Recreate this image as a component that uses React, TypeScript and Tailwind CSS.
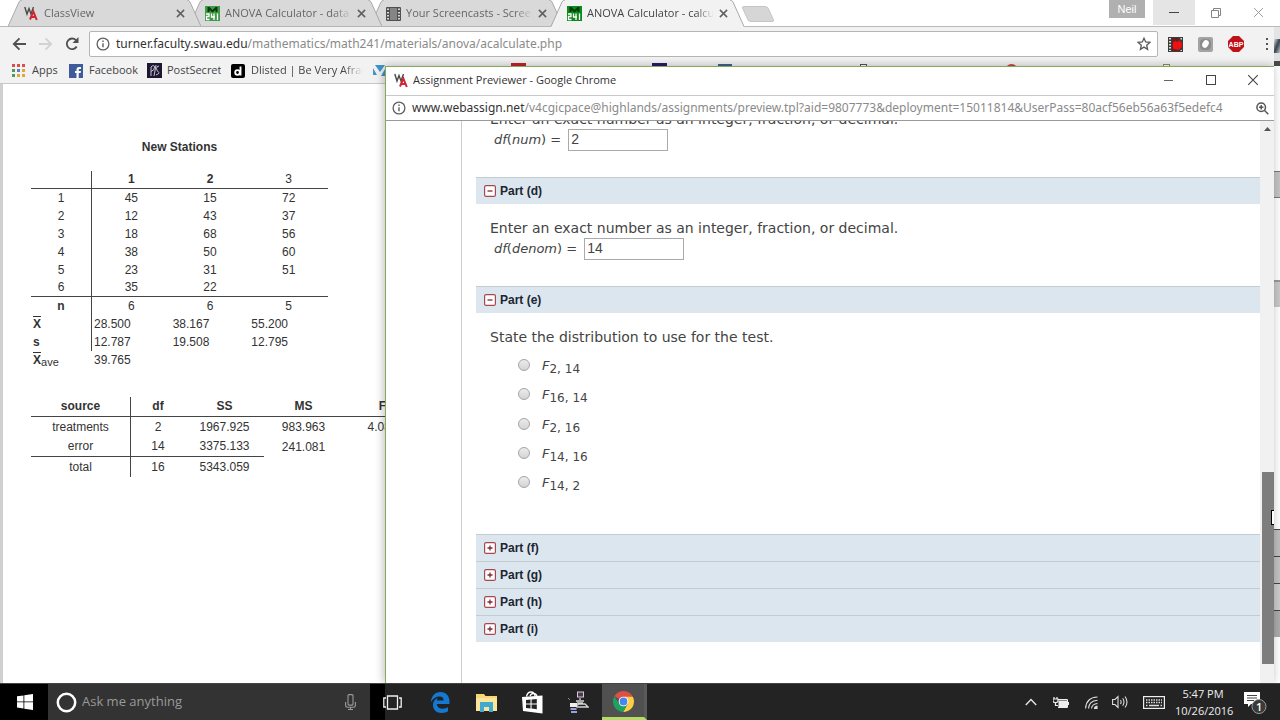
import { useState, type ReactNode } from 'react';

const UI = "font-['Open_Sans','Noto_Sans',sans-serif]";
const URL_FONT = "font-['Noto_Sans',sans-serif]";
const ARIAL = "font-['Liberation_Sans',sans-serif]";
const VERDANA = "font-['DejaVu_Sans',sans-serif]";

function WebAssignIcon() {
  return (
    <svg width="14" height="15" viewBox="0 0 14 15" fill="none" aria-hidden="true">
      <path d="M.8 1 3 8 5 2.500 7 8 9.500 1" stroke="#4a4a4a" strokeWidth="1.400" />
      <path d="M6 13.500 9.400 5.500 12.800 14M7.200 11H12" stroke="#cf2630" strokeWidth="2" />
    </svg>
  );
}

function MathIcon({ faded = false }: { faded?: boolean }) {
  return (
    <svg width="15" height="15" viewBox="0 0 15 15" fill="none" aria-hidden="true">
      <rect width="15" height="15" fill={faded ? '#3f9a45' : '#0d8a1b'} />
      <path d="M2.500 6V1h2l3 3 3-3h2v5H10.500V4L7.500 6.500 4.500 4V6z" fill="#073d0c" />
      <path d="M1 8h3v2.500H1.500V13.500H4.500M6.500 7.500V11H10M9 7.500V14M12.500 7.500V14" stroke="#fff" strokeWidth="1.300" />
    </svg>
  );
}

function FilmIcon() {
  return (
    <svg width="15" height="14" viewBox="0 0 15 14" aria-hidden="true">
      <rect width="15" height="14" rx="1" fill="#505050" />
      <rect x="4" y="1" width="7" height="12" fill="#858585" />
      <path d="M1 1.500h2v1.500H1zM1 5h2v1.500H1zM1 8h2v1.500H1zM1 11h2v1.500H1zM12 1.500h2v1.500h-2zM12 5h2v1.500h-2zM12 8h2v1.500h-2zM12 11h2v1.500h-2z" fill="#d6d6d6" />
    </svg>
  );
}

function InfoIcon() {
  return (
    <svg width="14" height="14" viewBox="0 0 14 14" fill="none" aria-hidden="true">
      <circle cx="7" cy="7" r="5.900" stroke="#5f5f5f" strokeWidth="1.300" />
      <path d="M7 6.200V10.300M7 3.600V5" stroke="#5f5f5f" strokeWidth="1.400" />
    </svg>
  );
}

function Cross({ size, color, width }: { size: number; color: string; width: number }) {
  return (
    <svg width={size} height={size} viewBox="0 0 10 10" fill="none" aria-hidden="true">
      <path d="M1 1 9 9M9 1 1 9" stroke={color} strokeWidth={width} />
    </svg>
  );
}

type TabProps = { icon: ReactNode; title: string; active?: boolean; layer: string };

function Tab({ icon, title, active = false, layer }: TabProps) {
  return (
    <div className={`relative -mr-3 flex h-[27px] w-[193px] shrink-0 items-center pl-4 pr-4 ${layer}`}>
      <svg className="absolute inset-0 h-full w-full" viewBox="0 0 193 27" preserveAspectRatio="none" aria-hidden="true">
        <path d="M0 27 11 2Q12 0 14 0H179Q181 0 182 2L193 27z" fill={active ? '#f2f2f2' : '#d9d9d9'} />
        <path d="M0 26.500 11 2Q12 0 14 0M179 0Q181 0 182 2L193 26.500" fill="none" stroke="#a8a8a8" />
        {!active && <path d="M0 26.500H193" stroke="#b5b5b5" />}
      </svg>
      <span className="relative flex w-5 shrink-0">{icon}</span>
      <button
        type="button"
        className={`relative w-[128px] overflow-hidden whitespace-nowrap text-left text-[11px] [mask-image:linear-gradient(to_right,black_85%,transparent_99%)] ${active ? 'text-[#444]' : 'text-[#666]'}`}
      >
        {title}
      </button>
      <button type="button" aria-label={`Close ${title}`} className="relative ml-auto flex">
        <Cross size={9} color="#606060" width={1.7} />
      </button>
    </div>
  );
}

function TabStrip() {
  return (
    <div className="flex h-[27px] items-start border-b border-[#b9b9b9] bg-white pl-2">
      <Tab icon={<WebAssignIcon />} title="ClassView" layer="z-[3]" />
      <Tab icon={<MathIcon faded />} title="ANOVA Calculator - data" layer="z-[2]" />
      <Tab icon={<FilmIcon />} title="Your Screencasts - Screen" layer="z-[1]" />
      <Tab icon={<MathIcon />} title="ANOVA Calculator - calcu" active layer="z-[4]" />
      <button type="button" aria-label="New tab" className="ml-[10px] mt-[6px] flex">
        <svg width="32" height="16" viewBox="0 0 32 16" aria-hidden="true">
          <path d="M2 .5H23Q25 .5 26 2L31.500 14Q32 15.500 30 15.500H9Q7 15.500 6 14L.5 2Q0 .5 2 .5z" fill="#d6d6d6" stroke="#c4c4c4" />
        </svg>
      </button>
      <div className="ml-auto flex items-start">
        <button type="button" className={`${ARIAL} mr-2 h-[18px] w-9 bg-[#b0b0b0] text-[11px] leading-[16px] text-white`}>
          Neil
        </button>
        <button type="button" aria-label="Minimize" className="flex h-[25px] w-[42px] items-center justify-center bg-[#e5e5e5]">
          <span className="h-px w-[10px] bg-[#444]" />
        </button>
        <button type="button" aria-label="Restore" className="flex h-[25px] w-[42px] items-center justify-center">
          <svg width="10" height="10" viewBox="0 0 10 10" fill="none" stroke="#858585" aria-hidden="true">
            <path d="M.5 2.500H7.500V9.500H.5zM2.500 2.500V.5H9.500V7.500H7.500" />
          </svg>
        </button>
        <button type="button" aria-label="Close" className="flex h-[25px] w-[43px] items-center justify-center">
          <Cross size={11} color="#999" width={0.9} />
        </button>
      </div>
    </div>
  );
}

function Toolbar() {
  return (
    <div className="flex h-[31px] items-center pr-3 pl-3 pt-[3px]">
      <button type="button" aria-label="Back" className="flex w-[27px]">
        <svg width="14" height="14" viewBox="0 0 14 14" fill="none" stroke="#505050" strokeWidth="1.800" aria-hidden="true">
          <path d="M14 7H2M7.500 1.300 1.800 7 7.500 12.700" />
        </svg>
      </button>
      <button type="button" aria-label="Forward" className="flex w-[26px]">
        <svg width="14" height="14" viewBox="0 0 14 14" fill="none" stroke="#d2d2d2" strokeWidth="1.800" aria-hidden="true">
          <path d="M0 7H12M6.500 1.300 12.200 7 6.500 12.700" />
        </svg>
      </button>
      <button type="button" aria-label="Reload" className="flex w-6">
        <svg width="14" height="14" viewBox="0 0 14 14" fill="none" aria-hidden="true">
          <path d="M11.700 9.500A5.300 5.300 0 1 1 11 3.200" stroke="#505050" strokeWidth="1.800" />
          <path d="M13.500 0V6H7.500z" fill="#505050" />
        </svg>
      </button>
      <div className="flex h-[26px] min-w-0 flex-1 items-center rounded-[2px] border border-[#b5b5b5] bg-white pr-[6px] pl-[6px]">
        <InfoIcon />
        <p className={`${URL_FONT} ml-[6px] flex-1 truncate text-xs leading-5 text-[#8a8a8a]`}>
          <span className="text-[#333]">turner.faculty.swau.edu</span>/mathematics/math241/materials/anova/acalculate.php
        </p>
        <button type="button" aria-label="Bookmark this page" className="flex">
          <svg width="14" height="14" viewBox="0 0 14 14" fill="none" stroke="#5a5a5a" strokeWidth="1.300" aria-hidden="true">
            <path d="M7 1.200 8.700 5 12.800 5.400 9.700 8.200 10.600 12.300 7 10.100 3.400 12.300 4.300 8.200 1.200 5.400 5.300 5z" />
          </svg>
        </button>
      </div>
      <div className="flex items-center pl-[10px]">
        <button type="button" aria-label="Screencast recorder" className="mr-[15px] flex">
          <svg width="15" height="15" viewBox="0 0 15 15" aria-hidden="true">
            <rect width="15" height="15" fill="#3c3c3c" />
            <rect x="4" y="1" width="7" height="13" fill="#6b2020" />
            <path d="M5 5.500 7 4 9 5 11 3.500 14 6 13.500 11 10 13 5 11.500z" fill="#f01010" />
            <path d="M1 1h2v1.500H1zM1 4h2v1.500H1zM1 7h2v1.500H1zM1 10h2v1.500H1zM1 13h2v1H1zM12.500 1h1.500v1.500h-1.500zM12.500 13h1.500v1h-1.500z" fill="#ddd" />
          </svg>
        </button>
        <button type="button" aria-label="Extension" className="mr-[15px] flex">
          <svg width="15" height="15" viewBox="0 0 15 15" aria-hidden="true">
            <rect width="15" height="15" rx="2" fill="#a3a3a3" />
            <rect x="2" y="2" width="11" height="11" rx="4" fill="#8c8c8c" />
            <ellipse cx="7.500" cy="7" rx="3" ry="4" transform="rotate(30 7.500 7)" fill="#fff" />
          </svg>
        </button>
        <button type="button" aria-label="Adblock Plus" className="mr-[22px] flex">
          <svg width="16" height="16" viewBox="0 0 16 16" aria-hidden="true">
            <path d="M5 0H11L16 5V11L11 16H5L0 11V5z" fill="#c01018" />
            <text x="8" y="10.500" fontSize="7" fontWeight="700" fill="#fff" textAnchor="middle" fontFamily="Liberation Sans, sans-serif">ABP</text>
          </svg>
        </button>
        <button type="button" aria-label="Menu" className="flex flex-col gap-[3px]">
          <span className="size-[2px] bg-[#555]" />
          <span className="size-[2px] bg-[#555]" />
          <span className="size-[2px] bg-[#555]" />
        </button>
      </div>
    </div>
  );
}

function AppsIcon() {
  const colors = ['#d9504a', '#d9504a', '#d9504a', '#4a9a5c', '#5a7fc0', '#e0a53c', '#4a9a5c', '#e0a53c', '#e0a53c'];
  return (
    <svg width="13" height="13" viewBox="0 0 13 13" aria-hidden="true">
      {colors.map((c, i) => (
        <rect key={i} x={(i % 3) * 5} y={Math.floor(i / 3) * 5} width="3" height="3" fill={c} />
      ))}
    </svg>
  );
}

function Bookmark({ icon, label, width, fade = false }: { icon: ReactNode; label?: string; width: string; fade?: boolean }) {
  return (
    <a href="#bookmark" className={`flex shrink-0 items-center ${width}`}>
      <span className="flex w-5 shrink-0">{icon}</span>
      {label && (
        <span className={`overflow-hidden whitespace-nowrap text-[11px] text-[#444] ${fade ? 'w-[112px] [mask-image:linear-gradient(to_right,black_82%,transparent)]' : ''}`}>
          {label}
        </span>
      )}
    </a>
  );
}

function BookmarksBar() {
  return (
    <nav aria-label="Bookmarks" className="flex h-[26px] items-center overflow-hidden border-b border-[#c8c8c8] pl-3">
      <Bookmark icon={<AppsIcon />} label="Apps" width="w-[57px]" />
      <Bookmark
        label="Facebook"
        width="w-[78px]"
        icon={
          <svg width="14" height="14" viewBox="0 0 14 14" aria-hidden="true">
            <rect width="14" height="14" fill="#3f5c9a" />
            <path d="M7.500 14V9H6V7H7.500V5.500Q7.500 3 10 3H12V5H10.500Q9.700 5 9.700 5.800V7H12L11.600 9H9.700V14z" fill="#fff" />
          </svg>
        }
      />
      <Bookmark
        label="PostSecret"
        width="w-[84px]"
        icon={
          <svg width="15" height="15" viewBox="0 0 15 15" fill="none" aria-hidden="true">
            <rect width="15" height="15" fill="#1d1730" />
            <path d="M4 13V4Q7 1 7.500 4T4 8.500M12 3Q9.500 3 9.500 5.500T11.500 9 9 12M9 2 7 13" stroke="#c8c4d4" strokeWidth="1" />
          </svg>
        }
      />
      <Bookmark
        label="Dlisted | Be Very Afrai"
        width="w-[142px]"
        fade
        icon={
          <svg width="14" height="14" viewBox="0 0 14 14" fill="none" aria-hidden="true">
            <rect width="14" height="14" rx="2" fill="#000" />
            <circle cx="6.500" cy="8.500" r="2.300" stroke="#fff" strokeWidth="1.800" />
            <path d="M9.500 2.500V11.500" stroke="#fff" strokeWidth="1.900" />
          </svg>
        }
      />
      <Bookmark
        width="w-[138px]"
        icon={
          <svg width="14" height="12" viewBox="0 0 14 12" aria-hidden="true">
            <path d="M2 0H12L7 7zM0 3 4 10H0zM12 4V11H8z" fill="#3f95cc" />
          </svg>
        }
      />
      <Bookmark width="w-[141px]" icon={<span className="size-[15px] bg-[#c4202f]" />} />
      <Bookmark width="w-[66px]" icon={<span className="size-[15px] border-2 border-dashed border-[#2a1a6a] bg-[#2a1a6a]" />} />
      <Bookmark width="w-[142px]" icon={<span className="size-[14px] bg-[#3f6488]" />} />
      <Bookmark width="w-[145px]" icon={<span className="h-[14px] w-[7px] border border-[#555] bg-white" />} />
      <Bookmark width="w-[158px]" icon={<span className="size-[13px] rounded-full bg-[#c8483c]" />} />
      <Bookmark width="w-[20px]" icon={<span className="h-[14px] w-[7px] border border-[#99904f] bg-white" />} />
    </nav>
  );
}

const scores: (string | number)[][] = [
  [1, 45, 15, 72],
  [2, 12, 43, 37],
  [3, 18, 68, 56],
  [4, 38, 50, 60],
  [5, 23, 31, 51],
  [6, 35, 22, ''],
];

const XBar = () => <span className="overline">X</span>;

function StationsTable() {
  const stats: { label: ReactNode; values: string[]; line: boolean }[] = [
    { label: <XBar />, values: ['28.500', '38.167', '55.200'], line: true },
    { label: 's', values: ['12.787', '19.508', '12.795'], line: true },
    { label: <><XBar /><sub className="text-[11px] font-normal">ave</sub></>, values: ['39.765', '', ''], line: false },
  ];
  return (
    <table className="w-[297px] table-fixed border-separate border-spacing-0 text-center text-xs leading-[17px]">
      <caption className="h-[33px] pt-px text-center font-bold">New Stations</caption>
      <colgroup>
        <col className="w-[61px]" />
        <col />
        <col />
        <col />
      </colgroup>
      <thead>
        <tr className="h-[18px]">
          <th className="border-b border-r border-[#444] p-0" />
          <th className="border-b border-[#444] p-0">1</th>
          <th className="border-b border-[#444] p-0">2</th>
          <th className="border-b border-[#444] p-0 font-normal">3</th>
        </tr>
      </thead>
      <tbody>
        {scores.map((row, r) => (
          <tr key={r} className="h-[18px]">
            {row.map((v, c) => (
              <td key={c} className={`border-[#444] p-0 ${c === 0 ? 'border-r' : ''} ${r === 5 ? 'border-b' : ''}`}>{v}</td>
            ))}
          </tr>
        ))}
        <tr className="h-[18px]">
          <th className="border-r border-[#444] p-0">n</th>
          <td className="p-0">6</td>
          <td className="p-0">6</td>
          <td className="p-0">5</td>
        </tr>
        {stats.map((s, i) => (
          <tr key={i} className="h-[18px] text-left">
            <th className={`border-[#444] py-0 pr-0 pl-[2px] ${s.line ? 'border-r' : ''}`}>{s.label}</th>
            {s.values.map((v, c) => (
              <td key={c} className="py-0 pr-0 pl-[2px]">{v}</td>
            ))}
          </tr>
        ))}
      </tbody>
    </table>
  );
}

function AnovaTable() {
  const head = ['source', 'df', 'SS', 'MS', 'F'];
  const rows = [
    ['treatments', '2', '1967.925', '983.963', '4.081'],
    ['error', '14', '3375.133', '241.081', ''],
    ['total', '16', '5343.059', '', ''],
  ];
  return (
    <table className="mt-7 w-[391px] table-fixed border-separate border-spacing-0 text-center text-xs leading-[17px]">
      <colgroup>
        <col className="w-[100px]" />
        <col className="w-[54px]" />
        <col />
        <col />
        <col />
      </colgroup>
      <thead>
        <tr className="h-5">
          {head.map((h, i) => (
            <th key={h} className={`border-b border-[#444] p-0 ${i === 0 ? 'border-r' : ''}`}>{h}</th>
          ))}
        </tr>
      </thead>
      <tbody>
        {rows.map((row, r) => (
          <tr key={r} className="h-5">
            {row.map((v, c) => (
              <td key={c} className={`border-[#444] p-0 ${c === 0 ? 'border-r' : ''} ${r === 1 && c < 3 ? 'border-b' : ''}`}>{v}</td>
            ))}
          </tr>
        ))}
      </tbody>
    </table>
  );
}

function PartBar({ name, open = false }: { name: string; open?: boolean }) {
  const [expanded, setExpanded] = useState(open);
  return (
    <button
      type="button"
      aria-expanded={expanded}
      onClick={() => setExpanded(!expanded)}
      className={`${ARIAL} flex h-[27px] w-full items-center gap-1 border-t border-[#c4ccd2] bg-[#dbe6ee] pl-2 text-xs font-bold text-[#1c2530]`}
    >
      <svg width="12" height="12" viewBox="0 0 12 12" aria-hidden="true">
        <rect x=".6" y=".6" width="10.800" height="10.800" rx="1.500" fill="#fff" stroke="#a8474f" strokeWidth="1.200" />
        <path d={expanded ? 'M3.500 6H8.500' : 'M3.500 6H8.500M6 3.500V8.500'} stroke="#7d2a35" strokeWidth="1.300" />
      </svg>
      {name}
    </button>
  );
}

function AnswerField({ id, variable, value }: { id: string; variable: string; value: string }) {
  return (
    <div className="px-[14px]">
      <p className="h-5 text-sm leading-5">Enter an exact number as an integer, fraction, or decimal.</p>
      <div className="flex h-[22px] items-center gap-[7px] pl-1">
        <label htmlFor={id}>
          <i>df</i>(<i>{variable}</i>) =
        </label>
        <input id={id} type="text" defaultValue={value} className={`${ARIAL} h-[22px] w-[100px] border border-[#aaa] bg-white px-[2px] pb-[2px] text-sm text-[#444] outline-none`} />
      </div>
    </div>
  );
}

function PreviewWindow() {
  const options = ['2, 14', '16, 14', '2, 16', '14, 16', '14, 2'];
  return (
    <section
      aria-label="Assignment Previewer"
      className="absolute bottom-0 left-[385px] right-[6px] top-[66px] z-10 flex flex-col border-l border-t border-[#86a85c] bg-white shadow-[-1px_0_9px_rgba(0,0,0,0.28)]"
    >
      <header className="flex h-[28px] shrink-0 items-center pb-[2px] pl-2">
        <span className="flex w-[19px]"><WebAssignIcon /></span>
        <h1 className="text-[11px] text-[#333]">Assignment Previewer - Google Chrome</h1>
        <div className="ml-auto flex">
          <button type="button" aria-label="Minimize" className="flex w-[42px] items-center justify-center">
            <span className="h-px w-[9px] bg-[#666]" />
          </button>
          <button type="button" aria-label="Maximize" className="flex h-[26px] w-[43px] items-center justify-center">
            <span className="size-[10px] border border-[#444]" />
          </button>
          <button type="button" aria-label="Close" className="flex w-[42px] items-center justify-center">
            <Cross size={12} color="#444" width={0.9} />
          </button>
        </div>
      </header>
      <div className="flex h-[26px] shrink-0 items-center border-b border-t border-b-[#9a9a9a] border-t-[#c8c8c8] pr-[5px] pl-[6px]">
        <InfoIcon />
        <p className={`${URL_FONT} ml-[6px] min-w-0 flex-1 overflow-hidden whitespace-nowrap text-xs leading-5 text-[#8a8a8a]`}>
          <span className="text-[#333]">www.webassign.net</span>
          /v4cgicpace@highlands/assignments/preview.tpl?aid=9807773&amp;deployment=15011814&amp;UserPass=80acf56eb56a63f5edefc4
        </p>
        <button type="button" aria-label="Zoom" className="ml-[6px] flex">
          <svg width="13" height="13" viewBox="0 0 13 13" fill="none" stroke="#555" strokeWidth="1.500" aria-hidden="true">
            <circle cx="5.200" cy="5.200" r="4.300" />
            <path d="M8.300 8.300 12.300 12.300M3 5.200H7.400M5.200 3V7.400" />
          </svg>
        </button>
      </div>
      <div className="flex min-h-0 flex-1">
        <div className="w-[76px] shrink-0 border-r border-[#ccc]" />
        <main className={`${VERDANA} min-w-0 flex-1 overflow-hidden pl-[14px] text-[13px] text-[#444]`}>
          <div className="-mt-3 mb-[26px]">
            <AnswerField id="df-num" variable="num" value="2" />
          </div>
          <PartBar name="Part (d)" open />
          <div className="mb-[26px] mt-[14px]">
            <AnswerField id="df-denom" variable="denom" value="14" />
          </div>
          <PartBar name="Part (e)" open />
          <fieldset className="mb-9 mt-[14px] px-[14px]">
            <legend className="h-5 text-sm leading-5">State the distribution to use for the test.</legend>
            <div className="mt-[3px] mb-px flex h-[147px] flex-col pl-7">
              {options.map((o) => (
                <label key={o} className="flex flex-1 items-center gap-3">
                  <input
                    type="radio"
                    name="distribution"
                    className="size-3 appearance-none rounded-full border border-[#a5a5a5] bg-linear-to-b from-[#ececec] to-[#d4d4d4] checked:bg-[#777]"
                  />
                  <span className="pt-[2px] leading-5"><i>F</i><sub className="text-xs">{o}</sub></span>
                </label>
              ))}
            </div>
          </fieldset>
          <PartBar name="Part (f)" />
          <PartBar name="Part (g)" />
          <PartBar name="Part (h)" />
          <PartBar name="Part (i)" />
        </main>
        <div className="relative w-[14px] shrink-0 bg-[#f1f1f1]">
          <svg className="mx-auto mt-[6px]" width="7" height="4" viewBox="0 0 7 4" aria-hidden="true"><path d="M0 4 3.500 0 7 4z" fill="#555" /></svg>
          <div className="absolute bottom-[19px] right-0 h-[192px] w-3 bg-[#7d7d7d]" />
          <div className="absolute bottom-[158px] right-0 h-[15px] w-[3px] border-y border-l border-black bg-white" />
        </div>
      </div>
    </section>
  );
}

function Taskbar() {
  return (
    <footer className="flex h-[37px] shrink-0 items-stretch border-t border-[#444] bg-[#232323]">
      <button type="button" aria-label="Start" className="flex w-12 shrink-0 items-center justify-center bg-black">
        <svg className="ml-[2px]" width="16" height="16" viewBox="0 0 16 16" fill="#fff" aria-hidden="true">
          <path d="M0 2.300 6.500 1.400V7.500H0zM7.300 1.300 16 0V7.500H7.300zM0 8.300H6.500V14.500L0 13.600zM7.300 8.300H16V16L7.300 14.700z" />
        </svg>
      </button>
      <div className="flex w-[322px] shrink-0 items-center bg-[#333] pr-[14px] pl-2">
        <svg width="21" height="21" viewBox="0 0 21 21" fill="none" aria-hidden="true"><circle cx="10.500" cy="10.500" r="8.700" stroke="#fff" strokeWidth="2.500" /></svg>
        <input aria-label="Search" placeholder="Ask me anything" className="ml-[5px] min-w-0 flex-1 bg-transparent text-[13px] text-white outline-none placeholder:text-[#9a9a9a]" />
        <svg width="11" height="16" viewBox="0 0 11 16" fill="none" stroke="#9a9a9a" strokeWidth="1.100" aria-hidden="true">
          <rect x="3" y=".6" width="5" height="10.500" rx="1" />
          <path d="M.6 8V11.500Q.6 13.200 2.500 13.200H8.500Q10.400 13.200 10.400 11.500V8M5.500 13V15.500M3 15.500H8" />
        </svg>
      </div>
      <div className="w-[15px] shrink-0 bg-black" />
      <div className="-ml-[15px] flex shrink-0 items-stretch">
        <button type="button" aria-label="Task view" className="flex w-[45px] items-center justify-center">
          <svg width="19" height="15" viewBox="0 0 19 15" fill="none" stroke="#f0f0f0" strokeWidth="1.300" aria-hidden="true">
            <path d="M4.500 1H14.500V14H4.500zM3 3H.8V12H3M16 3H18.200V12H16" />
          </svg>
        </button>
        <button type="button" aria-label="Edge" className="flex w-[48px] items-center justify-center">
          <svg className="ml-[2px]" width="20" height="21" viewBox="0 0 20 21" aria-hidden="true">
            <path d="M.8 10C1.500 4 5 0 10.500 0 16 0 19.500 4 19.500 9.500V12H6.800C7 15 9.500 16.700 12.500 16.700 14.700 16.700 16.500 16.200 18 15.300V19.300C16.300 20.300 14.300 21 11.700 21 6.200 21 3 17.500 3 13 3 9.700 5 7 8 5.800 7.200 6.700 6.900 7.600 6.800 8.600H13.600C13.600 5.800 12.300 4.500 9.500 4.500 6 4.500 2.800 6.500.8 10z" fill="#1379d3" />
          </svg>
        </button>
        <button type="button" aria-label="File Explorer" className="flex w-[46px] items-center justify-center">
          <svg width="21" height="19" viewBox="0 0 21 19" aria-hidden="true">
            <path d="M0 1H8L9.500 3H21V18H0z" fill="#f5d778" />
            <path d="M0 5H21V18H0z" fill="#fbe59b" />
            <path d="M4 9H17V19H13V14H8V19H4z" fill="#41a9d0" />
          </svg>
        </button>
        <button type="button" aria-label="Store" className="flex w-[46px] items-center justify-center">
          <svg width="21" height="23" viewBox="0 0 21 23" aria-hidden="true">
            <path d="M0 6 20.500 4.500V22.500L1 20z" fill="#fff" />
            <path d="M4.500 5.500Q5.500 1 9 1T13 5M8 5Q9 2.500 11.500 2.500T15 5" fill="none" stroke="#fff" strokeWidth="1.300" />
            <path d="M4 9 8.500 8.600V12.500H4zM9.600 8.500 14.800 8V12.500H9.600zM4 13.500H8.500V17.500L4 17zM9.600 13.500H14.800V18.200L9.600 17.600z" fill="#232323" />
          </svg>
        </button>
        <button type="button" aria-label="Network connection" className="flex w-[47px] items-center justify-center">
          <svg width="21" height="22" viewBox="0 0 21 22" fill="none" aria-hidden="true">
            <rect x="9.500" y="1" width="6" height="5" fill="#4a3a50" stroke="#d8c8d8" />
            <path d="M8 10H16M9 12H15M12 7V9M8 15 11 13H17L20 16H9z" stroke="#d5d5d5" strokeWidth="1.300" />
            <rect x="2" y="12" width="7" height="4" fill="#eee" />
            <path d="M2.500 18H8.500M3 21H9" stroke="#9a9fd8" strokeWidth="2" />
            <path d="M0 7 2 9" stroke="#888" />
          </svg>
        </button>
        <button type="button" aria-label="Google Chrome" className="flex w-[45px] items-center justify-center border-b-[3px] border-r-[3px] border-b-[#b4dc64] border-r-[#5a5a5a] bg-[#505050] pt-[2px]">
          <svg width="21" height="21" viewBox="0 0 22 22" aria-hidden="true">
            <path d="M11 11 1.470 5.500A11 11 0 0 1 20.530 5.500z" fill="#dd5144" />
            <path d="M11 6H20.800A11 11 0 0 1 10.600 22L15.500 13z" fill="#ffcd46" />
            <path d="M1.470 5.500A11 11 0 0 0 10.700 22L15.300 13.500 6.700 13.500z" fill="#1da261" />
            <circle cx="11" cy="11" r="5.100" fill="#fff" />
            <circle cx="11" cy="11" r="4.100" fill="#4a85ec" />
          </svg>
        </button>
      </div>
      <div className="ml-auto flex shrink-0 items-center pr-[13px]">
        <button type="button" aria-label="Show hidden icons" className="mr-4 flex">
          <svg width="12" height="8" viewBox="0 0 12 8" fill="none" aria-hidden="true"><path d="M.8 7 6 1.500 11.200 7" stroke="#e5e5e5" strokeWidth="1.400" /></svg>
        </button>
        <svg className="mr-4" width="16" height="13" viewBox="0 0 16 13" fill="none" aria-label="Battery" role="img">
          <path d="M1 1V3M4 1V3M0 3H5V5Q5 6.500 2.500 6.500T0 5zM2.500 6V9.500H5" stroke="#eee" strokeWidth="1.200" />
          <rect x="5.500" y="4.500" width="9" height="6.500" fill="#eee" />
          <path d="M5 3.500H14.500V11.500H5M15.500 6V9" stroke="#eee" strokeWidth="1" />
        </svg>
        <svg className="mr-[14px]" width="13" height="13" viewBox="0 0 13 13" fill="none" stroke="#ddd" strokeWidth="1.100" aria-label="Wi-Fi" role="img">
          <path d="M.6 12.500Q1 1.500 12.500 1M3.500 12.500Q4 5 12.500 4.300M6.500 12.500Q7 8 12.500 7.500" />
          <path d="M9.500 12.500Q9.500 10.500 12 10.200V12.500z" fill="#ddd" />
        </svg>
        <svg className="mr-[15px]" width="16" height="14" viewBox="0 0 16 14" fill="none" stroke="#ddd" strokeWidth="1.100" aria-label="Volume" role="img">
          <path d="M.6 4.500H3L6 1.500V12.500L3 9.500H.6zM8.500 5Q9.800 7 8.500 9M10.700 3.300Q13.300 7 10.700 10.700M13 1.500Q17 7 13 12.500" />
        </svg>
        <svg className="mr-[10px]" width="22" height="13" viewBox="0 0 22 13" fill="none" aria-label="Keyboard" role="img">
          <rect x=".6" y=".6" width="20.800" height="11.800" stroke="#eee" strokeWidth="1.200" />
          <path d="M3 4H19M3 6.500H19" stroke="#ddd" strokeWidth="1.300" strokeDasharray="1.500 1" />
          <path d="M3 9.500H4.500M6 9.500H16M17.500 9.500H19" stroke="#ddd" strokeWidth="1.300" />
        </svg>
        <div className="w-[56px] whitespace-nowrap text-center text-[11px] leading-[17px] text-[#eee]">
          <p>5:47 PM</p>
          <p>10/26/2016</p>
        </div>
        <button type="button" aria-label="1 notification" className="relative ml-[13px] flex">
          <svg width="23" height="24" viewBox="0 0 23 24" fill="none" aria-hidden="true">
            <path d="M0 2H16V14H7L4 17V14H0z" fill="#fff" />
            <path d="M3 5.500H13M3 8H13M3 10.500H10" stroke="#444" />
            <circle cx="15" cy="16.500" r="7" fill="#3a3a3a" stroke="#9a9a9a" />
          </svg>
          <span className="absolute bottom-[1px] left-[12px] text-[11px] font-semibold leading-[13px] text-white">1</span>
        </button>
      </div>
    </footer>
  );
}

function DesktopEdge() {
  return (
    <div aria-hidden="true" className="absolute bottom-0 right-0 top-[27px] z-[5] flex w-[6px] flex-col bg-white">
      <div className="h-[12px] bg-[#e4e4e4]" />
      <div className="h-[14px] bg-linear-to-br from-[#e4e4e4] via-[#34444f] to-[#c8c8c8]" />
      <div className="h-[8px] bg-[#e0e0e0]" />
      <div className="h-[5px] bg-[#4a4a4a]" />
      <div className="mt-[105px] h-[27px] border-y border-[#777] bg-[#c4c4c4]" />
      <div className="mt-[82px] h-[27px] border-t-2 border-[#999] bg-[#c8c8c8]" />
      <div className="mt-[222px] h-[27px] border-t border-[#444] bg-[#bdbdbd]" />
      <div className="h-[27px] border-t border-[#444] bg-[#c2c2c2]" />
      <div className="h-[27px] border-t border-[#444] bg-[#cccccc]" />
      <div className="h-[27px] border-t border-[#444] bg-[#ababab]" />
    </div>
  );
}

export default function App() {
  return (
    <div className={`${UI} flex h-screen min-h-[720px] flex-col overflow-hidden bg-white`}>
      <div className="relative flex min-h-0 flex-1 flex-col overflow-hidden">
        <div className="flex shrink-0 flex-col bg-[#f2f2f2]">
          <TabStrip />
          <Toolbar />
          <BookmarksBar />
        </div>
        <div className={`${ARIAL} flex-1 border-l-[3px] border-[#d0d0d0] pl-7 pt-[54px] text-[#333]`}>
          <StationsTable />
          <AnovaTable />
        </div>
        <DesktopEdge />
        <PreviewWindow />
      </div>
      <Taskbar />
    </div>
  );
}
